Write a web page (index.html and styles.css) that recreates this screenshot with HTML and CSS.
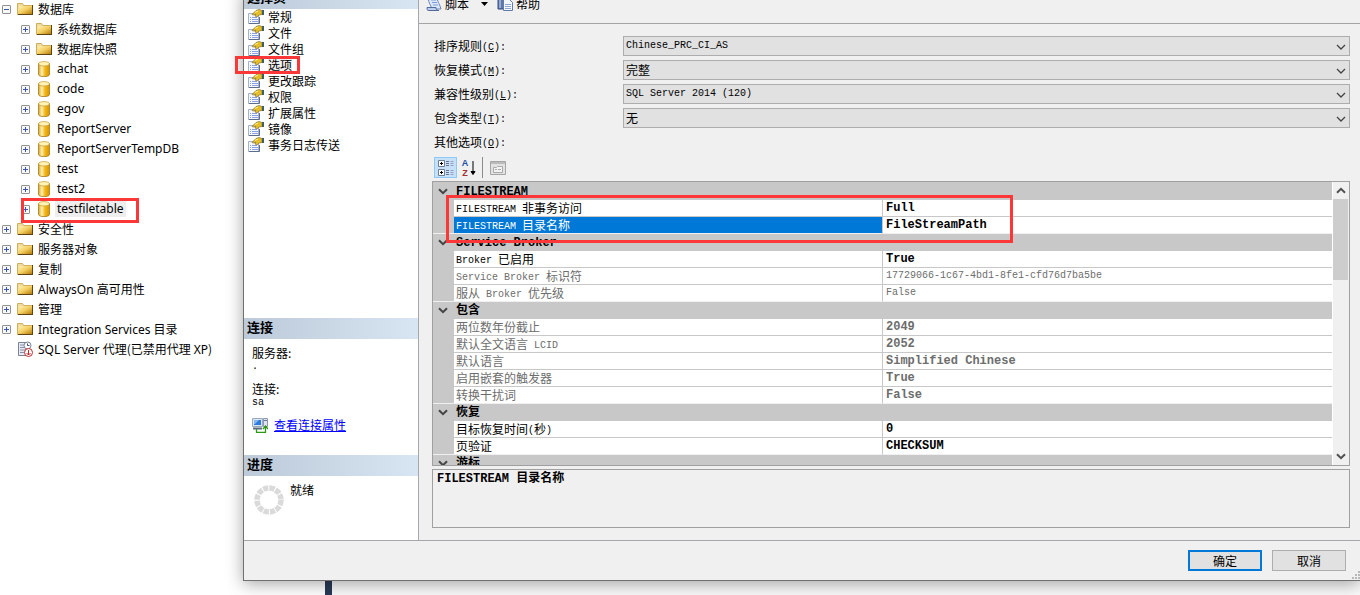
FILE: index.html
```html
<!DOCTYPE html>
<html lang="zh-CN">
<head>
  <meta charset="UTF-8" />
  <meta name="viewport" content="width=device-width, initial-scale=1.0" />
  <title>数据库属性 - testfiletable</title>
  <link rel="stylesheet" href="styles.css">
</head>
<body>
  <!-- ICONS -->
  <svg class="defs" aria-hidden="true">
    <defs>
      <linearGradient id="gold" x1="0" y1="0" x2="1" y2="1">
        <stop offset="0" stop-color="#fff3b8"/><stop offset=".5" stop-color="#f3cf62"/><stop offset="1" stop-color="#b87d08"/>
      </linearGradient>
      <linearGradient id="cyl" x1="0" y1="0" x2="1" y2="0">
        <stop offset="0" stop-color="#d9a52a"/><stop offset=".3" stop-color="#fff0b0"/><stop offset=".6" stop-color="#f2b61a"/><stop offset="1" stop-color="#d69500"/>
      </linearGradient>
    </defs>
    <symbol id="folder" viewBox="0 0 16 16">
      <path d="M.5 2.500h5l1 2h8v9H.5z" fill="#f0dca0" stroke="#cfae5c"/>
      <path d="M2 5h13v8H1z" fill="url(#gold)"/>
      <path d="M1 13.500h15M15.500 4v9" stroke="#5f4610" fill="none"/>
    </symbol>
    <symbol id="db" viewBox="0 0 16 16">
      <path d="M2.500 2.500v11c0 2.800 11 2.800 11 0v-11z" fill="url(#cyl)" stroke="#a87a18" stroke-width=".8"/>
      <ellipse cx="8" cy="2.800" rx="5.500" ry="2.200" fill="#fff3b4" stroke="#c9a548" stroke-width=".8"/>
    </symbol>
    <symbol id="agent" viewBox="0 0 16 16">
      <path d="M1.500 1.500h9v13h-9z" fill="#e8ebf3" stroke="#7a8296"/>
      <path d="M3 4h4M3 6.500h4M3 9h5M3 11.500h4" stroke="#8590a8"/>
      <circle cx="10.500" cy="4.500" r="3.500" fill="#fff" stroke="#7a8296"/>
      <path d="M10.500 2.500v2h2" stroke="#42527a" fill="none"/>
      <circle cx="11.500" cy="11.500" r="4" fill="#fff" stroke="#c02828"/>
      <path d="M11.500 9v5M9.500 12l2 2 2-2" stroke="#c02828" fill="none"/>
    </symbol>
    <symbol id="page" viewBox="0 0 16 16">
      <path d="M.5 4.500h10v10H.5z" fill="#f4f7fc" stroke="#a3b1cb"/>
      <path d="M11.500 8v6.500H1" stroke="#5d6e8d" fill="none"/>
      <path d="M2 8.500h1M4 8.500h5M2 10.500h1M4 10.500h6M2 12.500h1M4 12.500h6" stroke="#8ba0e0"/>
      <path d="M4 5.500l4-4 3-1 3 1v4l-3 .5-2 2-2-1 1-2-2 1z" fill="#e5bd27" stroke="#85702f" stroke-width=".7"/>
      <path d="M7 3.500l3-1.500" stroke="#fff3a0"/>
      <path d="M14 1h2v5h-2z" fill="#3b6161"/>
    </symbol>
    <symbol id="down" viewBox="0 0 10 6"><path d="M1 1l4 4 4-4" fill="none" stroke="currentColor" stroke-width="1.300"/></symbol>
    <symbol id="thick" viewBox="0 0 10 7"><path d="M1 1.200l4 4 4-4" fill="none" stroke="currentColor" stroke-width="2"/></symbol>
  </svg>

  <div class="workspace">
    <!-- OBJECT EXPLORER -->
    <aside class="explorer">
      <ul class="tree">
        <li><button class="toggle open" aria-label="折叠"></button><svg class="ico"><use href="#folder"/></svg><span>数据库</span></li>
        <li class="child"><button class="toggle" aria-label="展开"></button><svg class="ico"><use href="#folder"/></svg><span>系统数据库</span></li>
        <li class="child"><button class="toggle" aria-label="展开"></button><svg class="ico"><use href="#folder"/></svg><span>数据库快照</span></li>
        <li class="child"><button class="toggle" aria-label="展开"></button><svg class="ico"><use href="#db"/></svg><span class="en">achat</span></li>
        <li class="child"><button class="toggle" aria-label="展开"></button><svg class="ico"><use href="#db"/></svg><span class="en">code</span></li>
        <li class="child"><button class="toggle" aria-label="展开"></button><svg class="ico"><use href="#db"/></svg><span class="en">egov</span></li>
        <li class="child"><button class="toggle" aria-label="展开"></button><svg class="ico"><use href="#db"/></svg><span class="en">ReportServer</span></li>
        <li class="child"><button class="toggle" aria-label="展开"></button><svg class="ico"><use href="#db"/></svg><span class="en">ReportServerTempDB</span></li>
        <li class="child"><button class="toggle" aria-label="展开"></button><svg class="ico"><use href="#db"/></svg><span class="en">test</span></li>
        <li class="child"><button class="toggle" aria-label="展开"></button><svg class="ico"><use href="#db"/></svg><span class="en">test2</span></li>
        <li class="child marked"><button class="toggle" aria-label="展开"></button><svg class="ico"><use href="#db"/></svg><span class="en current">testfiletable</span><i class="mark mark-db"></i></li>
        <li><button class="toggle" aria-label="展开"></button><svg class="ico"><use href="#folder"/></svg><span>安全性</span></li>
        <li><button class="toggle" aria-label="展开"></button><svg class="ico"><use href="#folder"/></svg><span>服务器对象</span></li>
        <li><button class="toggle" aria-label="展开"></button><svg class="ico"><use href="#folder"/></svg><span>复制</span></li>
        <li><button class="toggle" aria-label="展开"></button><svg class="ico"><use href="#folder"/></svg><span><span class="en">AlwaysOn </span>高可用性</span></li>
        <li><button class="toggle" aria-label="展开"></button><svg class="ico"><use href="#folder"/></svg><span>管理</span></li>
        <li><button class="toggle" aria-label="展开"></button><svg class="ico"><use href="#folder"/></svg><span><span class="en">Integration Services </span>目录</span></li>
        <li class="leaf"><svg class="ico"><use href="#agent"/></svg><span><span class="en">SQL Server </span>代理(已禁用代理<span class="en"> XP</span>)</span></li>
      </ul>
    </aside>

    <!-- PROPERTIES DIALOG -->
    <div class="right">
      <div class="dialog" role="dialog" aria-label="数据库属性">
        <div class="panes">
          <div class="side">
            <h2>选择页</h2>
            <ul class="pages">
              <li><svg class="ico"><use href="#page"/></svg><span>常规</span></li>
              <li><svg class="ico"><use href="#page"/></svg><span>文件</span></li>
              <li><svg class="ico"><use href="#page"/></svg><span>文件组</span></li>
              <li class="marked"><svg class="ico"><use href="#page"/></svg><span class="current">选项</span><i class="mark mark-page"></i></li>
              <li><svg class="ico"><use href="#page"/></svg><span>更改跟踪</span></li>
              <li><svg class="ico"><use href="#page"/></svg><span>权限</span></li>
              <li><svg class="ico"><use href="#page"/></svg><span>扩展属性</span></li>
              <li><svg class="ico"><use href="#page"/></svg><span>镜像</span></li>
              <li><svg class="ico"><use href="#page"/></svg><span>事务日志传送</span></li>
            </ul>
            <h2>连接</h2>
            <div class="connection">
              <dl>
                <dt>服务器:</dt><dd>.</dd>
                <dt>连接:</dt><dd>sa</dd>
              </dl>
              <div class="link-row">
                <svg class="ico" viewBox="0 0 16 16">
                  <path d="M.5 1.500h10v8H.5z" fill="#dce6f2" stroke="#9aa8c0"/>
                  <path d="M2 3h7v5H2z" fill="#2e7be0"/><path d="M2 3h5L3 7H2z" fill="#83b8f5"/>
                  <path d="M1 11.500h9" stroke="#5d6a84" stroke-width="2"/>
                  <path d="M11.500 1.500h4v8h-4z" fill="#dfe4ee" stroke="#8d98b0"/><path d="M12 3.500h3" stroke="#6b7894"/>
                  <path d="M4.500 12v3.500h9V10M11 12l2.500-3 2.500 3" fill="none" stroke="#2d9a14" stroke-width="1.300"/>
                </svg>
                <a href="#">查看连接属性</a>
              </div>
            </div>
            <h2>进度</h2>
            <div class="progress">
              <svg class="spinner" viewBox="0 0 30 30"><circle cx="15" cy="15" r="12" fill="none" stroke="#dadada" stroke-width="5.500" stroke-dasharray="5.283 1"/></svg>
              <span>就绪</span>
            </div>
          </div>

          <div class="main">
            <div class="toolbar">
              <button>
                <svg class="ico" viewBox="0 0 16 16"><path d="M3 1h9c-2 2 1 6 2 9l1 3H6C5 9 1 5 3 1z" fill="#dbe7fa" stroke="#6f86b5"/><path d="M1 11.500h9c0 2 1 3 3 3H3c-2 0-2-1-2-3z" fill="#bccdee" stroke="#536a9c"/><path d="M5 4h5M6 6.500h5M7 9h5" stroke="#7f9bd0"/></svg>
                脚本
              </button>
              <button class="arrow" aria-label="脚本选项"><svg viewBox="0 0 7 4"><path d="M0 0h7L3.500 4z" fill="#000"/></svg></button>
              <button>
                <svg class="ico" viewBox="0 0 16 16"><path d="M1 1h6v12H1z" fill="#5f76ad" stroke="#364c80"/><path d="M3 1v11" stroke="#d2def4"/><path d="M6.500 3.500h6l3 3v8h-9z" fill="#f2f6fd" stroke="#6379a8"/><path d="M8 8.500h6M8 10.500h6M8 12.500h6" stroke="#8da5d5"/></svg>
                帮助
              </button>
            </div>

            <div class="content">
              <div class="form">
                <label for="collation">排序规则<span class="mono">(<u>C</u>):</span></label>
                <div class="combo"><select id="collation"><option>Chinese_PRC_CI_AS</option></select><svg><use href="#down"/></svg></div>
                <label for="recovery">恢复模式<span class="mono">(<u>M</u>):</span></label>
                <div class="combo"><select id="recovery" class="zh"><option>完整</option></select><svg><use href="#down"/></svg></div>
                <label for="compat">兼容性级别<span class="mono">(<u>L</u>):</span></label>
                <div class="combo"><select id="compat"><option>SQL Server 2014 (120)</option></select><svg><use href="#down"/></svg></div>
                <label for="contain">包含类型<span class="mono">(<u>T</u>):</span></label>
                <div class="combo"><select id="contain" class="zh"><option>无</option></select><svg><use href="#down"/></svg></div>
                <span class="label">其他选项<span class="mono">(<u>O</u>):</span></span>
              </div>

              <div class="grid-tools">
                <button class="active" aria-label="按分类顺序">
                  <svg viewBox="0 0 18 18"><path d="M1.500 1.500h6v6h-6zM1.500 10.500h6v6h-6z" fill="#fff" stroke="#6d7e96"/><path d="M3 4.500h3M4.500 3v3M3 13.500h3M4.500 12v3" stroke="#000"/><path d="M9 2.500h3M9 4.500h3M9 6.500h3M9 11.500h3M9 13.500h3M9 15.500h3" stroke="#66748e"/><path d="M13.500 2.500h3M13.500 4.500h3M13.500 6.500h3M13.500 11.500h3M13.500 13.500h3M13.500 15.500h3" stroke="#9a9fc8"/></svg>
                </button>
                <button class="sort" aria-label="按字母顺序"><span class="az"><b>A</b><b>Z</b></span><svg viewBox="0 0 6 16"><path d="M3 1v13M1 11.500L3 14.500 5 11.500z" stroke="#000" fill="#000"/></svg></button>
                <span class="sep"></span>
                <button disabled aria-label="属性页">
                  <svg viewBox="0 0 18 18"><path d="M1.500 2.500h15v13h-15z" fill="#e2e2e2" stroke="#a5a5a5"/><path d="M2 4h14" stroke="#bbb" stroke-width="2"/><path d="M4.500 8.500h3l1-1h5v6h-9z" fill="#f2f2f2" stroke="#aaa"/><path d="M6 10.500h2M9 10.500h3" stroke="#aaa"/></svg>
                </button>
              </div>

              <div class="props">
                <div class="rows">
                  <table>
                    <colgroup><col class="c-gutter"><col class="c-name"><col></colgroup>
                    <tbody>
                      <tr class="cat"><th><svg><use href="#thick"/></svg></th><th colspan="2">FILESTREAM</th></tr>
                      <tr><td></td><td><span class="mono">FILESTREAM </span>非事务访问</td><td>Full</td></tr>
                      <tr class="sel"><td></td><td><span class="mono">FILESTREAM </span>目录名称</td><td>FileStreamPath</td></tr>
                    </tbody>
                    <tbody>
                      <tr class="cat"><th><svg><use href="#thick"/></svg></th><th colspan="2">Service Broker</th></tr>
                      <tr><td></td><td><span class="mono">Broker </span>已启用</td><td>True</td></tr>
                      <tr class="ro plain"><td></td><td><span class="mono">Service Broker </span>标识符</td><td>17729066-1c67-4bd1-8fe1-cfd76d7ba5be</td></tr>
                      <tr class="ro plain"><td></td><td>服从<span class="mono"> Broker </span>优先级</td><td>False</td></tr>
                    </tbody>
                    <tbody>
                      <tr class="cat"><th><svg><use href="#thick"/></svg></th><th colspan="2">包含</th></tr>
                      <tr class="ro"><td></td><td>两位数年份截止</td><td>2049</td></tr>
                      <tr class="ro"><td></td><td>默认全文语言<span class="mono"> LCID</span></td><td>2052</td></tr>
                      <tr class="ro"><td></td><td>默认语言</td><td>Simplified Chinese</td></tr>
                      <tr class="ro"><td></td><td>启用嵌套的触发器</td><td>True</td></tr>
                      <tr class="ro"><td></td><td>转换干扰词</td><td>False</td></tr>
                    </tbody>
                    <tbody>
                      <tr class="cat"><th><svg><use href="#thick"/></svg></th><th colspan="2">恢复</th></tr>
                      <tr><td></td><td>目标恢复时间<span class="mono">(</span>秒<span class="mono">)</span></td><td>0</td></tr>
                      <tr><td></td><td>页验证</td><td>CHECKSUM</td></tr>
                    </tbody>
                    <tbody>
                      <tr class="cat"><th><svg><use href="#thick"/></svg></th><th colspan="2">游标</th></tr>
                    </tbody>
                  </table>
                </div>
                <div class="scroll">
                  <button aria-label="向上"><svg class="up"><use href="#thick"/></svg></button>
                  <div class="track"><div class="thumb"></div></div>
                  <button aria-label="向下"><svg><use href="#thick"/></svg></button>
                </div>
                <i class="mark mark-rows"></i>
              </div>

              <div class="desc">FILESTREAM 目录名称</div>
            </div>
          </div>
        </div>

        <div class="actions">
          <button class="ok">确定</button>
          <button>取消</button>
          <svg class="grip" viewBox="0 0 8 8"><path d="M6 0h2v2H6zM3 3h2v2H3zM6 3h2v2H6zM0 6h2v2H0zM3 6h2v2H3zM6 6h2v2H6z" fill="#b8b8b8"/></svg>
        </div>
      </div>
      <div class="behind"><span class="splitter"></span><span class="editor"></span></div>
    </div>
  </div>
</body>
</html>
```

FILE: styles.css
```css
*{box-sizing:border-box}
body{margin:0;height:100vh;overflow:hidden;background:#fff;color:#000;font:12px/16px "Noto Sans CJK SC",sans-serif}
ul,dl,dd,h2{margin:0;padding:0;list-style:none}
button,select{font:inherit;color:inherit;margin:0}
button{padding:0;border:0;background:none}
svg{display:block;flex:none}
.defs{position:absolute;width:0;height:0}
.ico{width:16px;height:16px}
.workspace{display:grid;grid-template-columns:243px 1fr;min-height:100vh}

/* annotations */
.marked{position:relative}
.mark{position:absolute;border:3px solid #fb3737;z-index:5;pointer-events:none}
.mark-db{left:21px;top:-1px;width:118px;height:25px}
.mark-page{left:-9px;top:-1px;width:65px;height:18px}
.mark-rows{left:13px;top:13px;width:567px;height:48px}

/* tree */
.explorer{white-space:nowrap}
.tree{margin-top:-1px}
.tree li{display:flex;align-items:center;height:20px;padding-left:2px}
.tree .child{padding-left:21px}
.tree .leaf{padding-left:17px}
.tree .ico{margin-right:5px}
.tree .en{font-family:"Noto Sans","Open Sans",sans-serif}
.tree .current{background:#eee;margin:0 -2px;padding:0 2px}
.toggle{position:relative;flex:none;width:9px;height:9px;margin-right:6px;border:1px solid #919191;border-radius:1px;background:#f8f8f8}
.toggle::before,.toggle::after{content:"";position:absolute;left:1px;top:3px;width:5px;height:1px;background:#3b5aa5}
.toggle::after{left:3px;top:1px;width:1px;height:5px}
.toggle.open::after{display:none}

/* dialog */
.right{display:flex;flex-direction:column;min-width:0}
.dialog{position:relative;margin-top:-12px;background:#f0f0f0;border-left:1px solid #707070;border-bottom:1px solid #707070;box-shadow:0 3px 16px rgba(0,0,0,.35)}
.panes{display:grid;grid-template-columns:175px 1fr;border-bottom:1px solid #a5a7ad}
.side{display:flex;flex-direction:column;background:#fff;border-right:1px solid #a5a7ad}
.side h2{height:21px;padding-left:3px;background:linear-gradient(90deg,#bccad9,#d8e5f2);font-size:13px;line-height:18px}
.pages{height:309px}
.pages li{display:flex;align-items:center;height:16px;padding-left:4px;gap:4px}
.pages .current{background:#f0f0f0}
.connection{height:116px;padding:6px 8px}
.connection dd{height:12px;margin-bottom:8px;font:10px/12px "Liberation Mono",monospace}
.connection dt{height:16px}
.link-row{display:flex;align-items:center;gap:6px}
.link-row a{color:#00f}
.progress{display:flex;gap:6px;height:64px;padding:6px 10px}
.spinner{width:30px;height:30px;margin-top:3px}

.toolbar{display:flex;align-items:center;height:36px;padding:0 7px 4px;border-bottom:1px solid #a5a5a5}
.toolbar button{display:flex;align-items:center;gap:3px}
.toolbar .arrow{padding:0 9px 0 12px}
.arrow svg{width:7px;height:4px}
.content{padding:12px 10px 11px 13px}
.form{display:grid;grid-template-columns:191px 1fr;grid-auto-rows:20px;row-gap:4px}
.form label,.label{padding-left:2px;line-height:19px}
.combo{position:relative}
.combo select{display:block;width:100%;height:20px;padding:0 2px;border:1px solid #adadad;border-radius:0;background:#e1e1e1;appearance:none;font:10px/18px "Liberation Mono",monospace}
.combo .zh{font:12px/18px "Noto Sans CJK SC",sans-serif}
.combo svg{position:absolute;right:4px;top:8px;width:10px;height:6px;color:#444}

.grid-tools{display:flex;align-items:center;height:21px;margin:5px 0 3px;padding-left:2px}
.grid-tools button{display:flex;align-items:center;justify-content:center;width:23px;height:21px}
.grid-tools svg{width:18px;height:18px}
.grid-tools .active{border:1px solid #90c8f6;background:#c5e0f7}
.grid-tools .sort{gap:2px;width:24px}
.grid-tools .sort svg{width:6px;height:16px}
.az b{display:block;font:bold 9px/10px "Liberation Sans",sans-serif;color:#2450a0}
.az b+b{color:#a33030}
.sep{width:1px;height:21px;margin:0 3px 0 1px;background:#8c8c8c}

.props{position:relative;display:flex;height:285px;border:1px solid #a0a0a0;background:#c8c8c8}
.rows{flex:1;min-width:0;overflow:hidden;padding-top:1px}
.props table{width:100%;border-collapse:separate;border-spacing:0;table-layout:fixed}
.c-gutter{width:21px}
.c-name{width:429px}
.props td,.props th{height:17px;padding:0 2px;text-align:left;line-height:14px;white-space:nowrap;overflow:hidden}
.props td{border-bottom:1px solid #c8c8c8;background:#fff}
.props td:first-child{background:#c8c8c8}
.props td:nth-child(2){border-right:1px solid #c8c8c8}
.props td:last-child{padding-left:3px;font-family:"Liberation Mono",monospace;font-weight:bold}
.props tr:last-child td{border-bottom-color:#f0f0f0}
.props th,.desc{font-family:"Liberation Mono","Noto Sans CJK SC",monospace}
.props th:first-child{padding-left:5px}
.props th svg{width:10px;height:7px;color:#444}
.props .ro td{color:#6d6d6d}
.props .plain td:last-child{font-size:10px;font-weight:normal}
.props .sel td:nth-child(2){background:#0078d7;color:#fff}
.mono{font-family:"Liberation Mono",monospace;font-size:10px;line-height:10px;white-space:pre;vertical-align:1px}
.scroll{display:flex;flex-direction:column;width:17px;padding-right:1px;border-left:1px solid #fff;background:#f0f0f0}
.scroll button{display:flex;align-items:center;justify-content:center;height:17px;color:#505050}
.scroll svg{width:10px;height:7px}
.up{transform:rotate(180deg)}
.track{flex:1}
.thumb{height:81px;background:#cdcdcd}
.desc{height:59px;margin-top:3px;padding:2px 4px;border:1px solid #a0a0a0;font-weight:bold;line-height:14px}

.actions{position:relative;display:flex;justify-content:flex-end;gap:10px;padding:9px 14px}
.actions button{width:74px;height:21px;border:1px solid #adadad;background:#e1e1e1;line-height:18px}
.actions .ok{border:2px solid #0078d7;line-height:16px}
.grip{position:absolute;right:0;bottom:1px;width:8px;height:8px}
.behind{display:flex;flex:1;padding-left:82px}
.splitter{width:7px;background:#293955}
.editor{flex:1;background:#fafafa}
```
